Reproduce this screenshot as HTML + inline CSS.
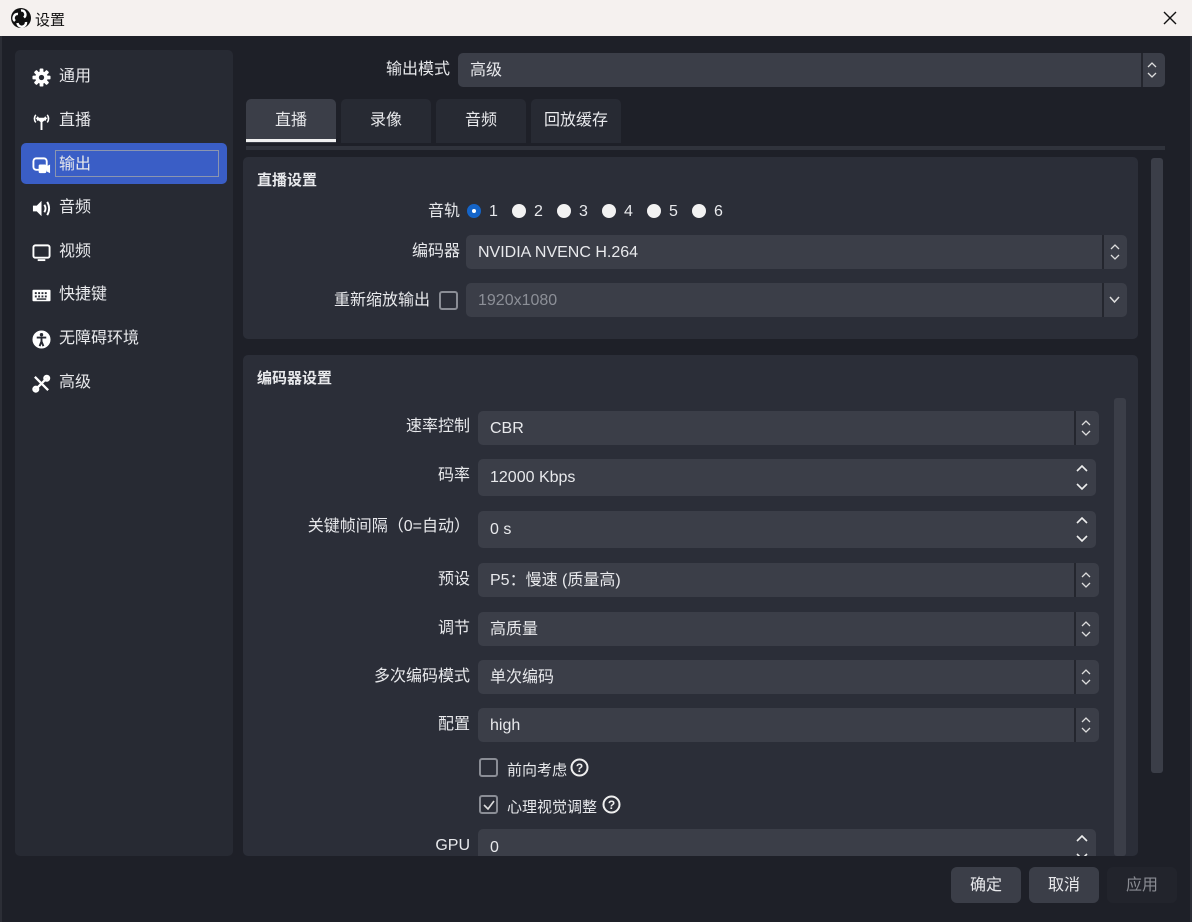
<!DOCTYPE html>
<html><head><meta charset="utf-8"><style>
*{box-sizing:border-box;margin:0;padding:0}
body{width:1192px;height:922px;overflow:hidden;background:#1e2028;font-family:"Liberation Sans","Noto Sans CJK SC",sans-serif;color:#e8e9ec;font-size:15px;position:relative}
.a{position:absolute}
.title{left:0;top:0;width:1192px;height:36px;background:#f5f1ef;color:#111;font-size:15px}
.panel{background:#272a33;border-radius:5px}
.grp{background:#2b2e38;border-radius:5px}
.in{background:#3b3e48;border-radius:5px;height:34px;line-height:35px;padding-left:12px;font-size:16px}
.lab{text-align:right;font-size:16px;line-height:20px}
.sep{position:absolute;top:0;bottom:0;width:2px;background:#24262e}
.nav{left:32px;font-size:16px;line-height:20px;display:flex;align-items:center}
.nav svg{margin-right:8px}
.tab{top:99px;height:44px;line-height:44px;text-align:center;background:#272a33;border-radius:5px 5px 0 0;font-size:16px}
.cb{width:19px;height:19px;border:2px solid #8a8d95;border-radius:3px}
.btn{top:867px;height:36px;width:70px;line-height:37px;text-align:center;background:#3b3e48;border-radius:6px;font-size:16px}
.rad{width:14px;height:14px;border-radius:50%;background:#f2f2f2;top:204px}
</style></head><body>
<div class="a title">
 <svg class="a" style="left:11px;top:8px" width="20" height="20" viewBox="0 0 20 20"><circle cx="10" cy="10" r="10" fill="#111"/><path d="M10 2.5A4 4 0 0 1 13 9.5M4 13A4 4 0 0 1 7 6M15 14A4 4 0 0 1 6.5 15" stroke="#fff" stroke-width="2.4" fill="none"/></svg>
 <div class="a" style="left:35px;top:9px">设置</div>
 <svg class="a" style="left:1163px;top:11px" width="14" height="14"><path d="M1 1L13 13M13 1L1 13" stroke="#111" stroke-width="1.4"/></svg>
</div>
<div class="a" style="left:0;top:36px;width:2px;height:886px;background:#2c2e36"></div>
<div class="a" style="left:1190px;top:36px;width:2px;height:886px;background:#2c2e36"></div>

<div class="a panel" style="left:15px;top:50px;width:218px;height:806px"></div>
<div class="a" style="left:21px;top:143px;width:206px;height:41px;background:#3a5ec6;border-radius:5px"></div>
<div class="a" style="left:55px;top:150px;width:164px;height:27px;border:1px solid #8a95b0"></div>

<div class="a nav" style="top:67px"><svg width="19" height="19" viewBox="0 0 20 20"><g fill="#fff"><circle cx="10" cy="10" r="6.5"/><rect x="8" y="0.5" width="4" height="19" rx="1"/><rect x="8" y="0.5" width="4" height="19" rx="1" transform="rotate(45 10 10)"/><rect x="8" y="0.5" width="4" height="19" rx="1" transform="rotate(90 10 10)"/><rect x="8" y="0.5" width="4" height="19" rx="1" transform="rotate(135 10 10)"/></g><circle cx="10" cy="10" r="2.8" fill="#272a33"/></svg>通用</div>
<div class="a nav" style="top:111px"><svg width="19" height="19" viewBox="0 0 20 20" fill="none" stroke="#fff" stroke-width="1.6"><path d="M4 3Q1 7 4 11M16 3Q19 7 16 11M6.5 5Q5 7 6.5 9M13.5 5Q15 7 13.5 9"/><path d="M10 8V19M6 7H14L10 10Z" fill="#fff" stroke-width="2"/></svg>直播</div>
<div class="a nav" style="top:155px"><svg width="19" height="19" viewBox="0 0 20 20"><rect x="1.5" y="2.5" width="14" height="12" rx="3" fill="none" stroke="#fff" stroke-width="2"/><rect x="7" y="9" width="8" height="9" rx="1.5" fill="#fff"/><path d="M15 11L19 9V18L15 16Z" fill="#fff"/></svg>输出</div>
<div class="a nav" style="top:198px"><svg width="19" height="19" viewBox="0 0 20 20"><path d="M1 7H5L10 2V18L5 13H1Z" fill="#fff"/><path d="M13 6Q15.5 10 13 14M16 3Q20 10 16 17" stroke="#fff" stroke-width="2" fill="none"/></svg>音频</div>
<div class="a nav" style="top:242px"><svg width="19" height="19" viewBox="0 0 20 20"><rect x="1.5" y="2.5" width="17" height="13" rx="2" fill="none" stroke="#fff" stroke-width="2"/><rect x="6" y="17" width="8" height="2" fill="#fff"/></svg>视频</div>
<div class="a nav" style="top:285px"><svg width="19" height="19" viewBox="0 0 20 20"><rect x="0.5" y="4" width="19" height="12" rx="1" fill="#fff"/><g fill="#272a33"><rect x="3" y="6.5" width="2" height="2"/><rect x="6.5" y="6.5" width="2" height="2"/><rect x="10" y="6.5" width="2" height="2"/><rect x="13.5" y="6.5" width="2" height="2"/><rect x="3" y="10" width="2" height="2"/><rect x="6.5" y="10" width="2" height="2"/><rect x="10" y="10" width="2" height="2"/><rect x="13.5" y="10" width="2" height="2"/><rect x="5" y="13" width="10" height="1.5"/></g></svg>快捷键</div>
<div class="a nav" style="top:329px"><svg width="19" height="19" viewBox="0 0 20 20"><circle cx="10" cy="10" r="9.5" fill="#fff"/><circle cx="10" cy="5" r="1.8" fill="#272a33"/><path d="M5 8H15M10 8V12M8 17L10 12L12 17" stroke="#272a33" stroke-width="2" fill="none"/></svg>无障碍环境</div>
<div class="a nav" style="top:373px"><svg width="19" height="19" viewBox="0 0 20 20" stroke="#fff" stroke-width="2.4" fill="none"><path d="M3 3L17 17M17 3L3 17"/><circle cx="15.5" cy="4.5" r="2.5"/><circle cx="4" cy="16" r="2.5"/></svg>高级</div>

<div class="a lab" style="left:360px;top:60px;width:90px;">输出模式</div>
<div class="a in" style="left:458px;top:53px;width:707px;">高级<span class="sep" style="left:683px"></span><svg class="a" style="right:8px;top:9px" width="10" height="16"><path d="M1 5L5 1L9 5M1 11L5 15L9 11" stroke="#ddd" stroke-width="1.3" fill="none"/></svg></div>

<div class="a" style="left:246px;top:146px;width:919px;height:4px;background:#30333c"></div>
<div class="a tab" style="left:246px;width:90px;background:#3b3e48">直播</div>
<div class="a" style="left:246px;top:139px;width:90px;height:3px;background:#f0f0f0"></div>
<div class="a tab" style="left:341px;width:90px">录像</div>
<div class="a tab" style="left:436px;width:90px">音频</div>
<div class="a tab" style="left:531px;width:90px">回放缓存</div>

<div class="a" style="left:1151px;top:158px;width:12px;height:615px;background:#3b3e48;border-radius:3px"></div>

<div class="a grp" style="left:243px;top:157px;width:895px;height:182px"></div>
<div class="a" style="left:257px;top:169px;font-weight:bold;font-size:15px">直播设置</div>
<div class="a lab" style="left:400px;top:202px;width:60px">音轨</div>
<div class="a" style="left:467px;top:204px;width:14px;height:14px;border-radius:50%;background:#1464c8;border:3px solid #1464c8"><div style="width:4px;height:4px;background:#fff;border-radius:50%;margin:2px"></div></div>
<div class="a" style="left:489px;top:203px;font-size:16px">1</div>
<div class="a rad" style="left:512px"></div><div class="a" style="left:534px;top:203px;font-size:16px">2</div>
<div class="a rad" style="left:557px"></div><div class="a" style="left:579px;top:203px;font-size:16px">3</div>
<div class="a rad" style="left:602px"></div><div class="a" style="left:624px;top:203px;font-size:16px">4</div>
<div class="a rad" style="left:647px"></div><div class="a" style="left:669px;top:203px;font-size:16px">5</div>
<div class="a rad" style="left:692px"></div><div class="a" style="left:714px;top:203px;font-size:16px">6</div>

<div class="a lab" style="left:370px;top:242px;width:90px">编码器</div>
<div class="a in" style="left:466px;top:235px;width:661px">NVIDIA NVENC H.264<span class="sep" style="left:636px"></span><svg class="a" style="right:7px;top:9px" width="10" height="16"><path d="M1 5L5 1L9 5M1 11L5 15L9 11" stroke="#ddd" stroke-width="1.3" fill="none"/></svg></div>
<div class="a lab" style="left:290px;top:291px;width:140px">重新缩放输出</div>
<div class="a cb" style="left:439px;top:291px"></div>
<div class="a in" style="left:466px;top:283px;width:661px;color:#8c8f97">1920x1080<span class="sep" style="left:636px"></span><svg class="a" style="right:7px;top:13px" width="11" height="8"><path d="M1 1L5.5 6L10 1" stroke="#ddd" stroke-width="1.5" fill="none"/></svg></div>

<div class="a grp" style="left:243px;top:355px;width:895px;height:501px"></div>
<div class="a" style="left:257px;top:367px;font-weight:bold;font-size:15px">编码器设置</div>
<div class="a" style="left:1114px;top:398px;width:12px;height:458px;background:#3b3e48;border-radius:3px"></div>

<div class="a lab" style="left:340px;top:417px;width:130px">速率控制</div>
<div class="a in" style="left:478px;top:411px;width:621px">CBR<span class="sep" style="left:596px"></span><svg class="a" style="right:8px;top:9px" width="10" height="16"><path d="M1 5L5 1L9 5M1 11L5 15L9 11" stroke="#ddd" stroke-width="1.3" fill="none"/></svg></div>
<div class="a lab" style="left:340px;top:466px;width:130px">码率</div>
<div class="a in" style="left:478px;top:459px;width:618px;height:37px;line-height:38px">12000 Kbps<svg class="a" style="right:8px;top:6px" width="12" height="26"><path d="M1 6L6 1L11 6M1 19L6 24L11 19" stroke="#eee" stroke-width="1.6" fill="none"/></svg></div>
<div class="a lab" style="left:270px;top:517px;width:200px">关键帧间隔（0=自动）</div>
<div class="a in" style="left:478px;top:511px;width:618px;height:37px;line-height:38px">0 s<svg class="a" style="right:8px;top:6px" width="12" height="26"><path d="M1 6L6 1L11 6M1 19L6 24L11 19" stroke="#eee" stroke-width="1.6" fill="none"/></svg></div>
<div class="a lab" style="left:340px;top:570px;width:130px">预设</div>
<div class="a in" style="left:478px;top:563px;width:621px">P5：慢速 (质量高)<span class="sep" style="left:596px"></span><svg class="a" style="right:8px;top:9px" width="10" height="16"><path d="M1 5L5 1L9 5M1 11L5 15L9 11" stroke="#ddd" stroke-width="1.3" fill="none"/></svg></div>
<div class="a lab" style="left:340px;top:619px;width:130px">调节</div>
<div class="a in" style="left:478px;top:612px;width:621px">高质量<span class="sep" style="left:596px"></span><svg class="a" style="right:8px;top:9px" width="10" height="16"><path d="M1 5L5 1L9 5M1 11L5 15L9 11" stroke="#ddd" stroke-width="1.3" fill="none"/></svg></div>
<div class="a lab" style="left:320px;top:667px;width:150px">多次编码模式</div>
<div class="a in" style="left:478px;top:660px;width:621px">单次编码<span class="sep" style="left:596px"></span><svg class="a" style="right:8px;top:9px" width="10" height="16"><path d="M1 5L5 1L9 5M1 11L5 15L9 11" stroke="#ddd" stroke-width="1.3" fill="none"/></svg></div>
<div class="a lab" style="left:340px;top:715px;width:130px">配置</div>
<div class="a in" style="left:478px;top:708px;width:621px">high<span class="sep" style="left:596px"></span><svg class="a" style="right:8px;top:9px" width="10" height="16"><path d="M1 5L5 1L9 5M1 11L5 15L9 11" stroke="#ddd" stroke-width="1.3" fill="none"/></svg></div>

<div class="a cb" style="left:479px;top:758px"></div>
<div class="a" style="left:507px;top:759px;font-size:15px">前向考虑</div>
<svg class="a" style="left:570px;top:758px" width="19" height="19"><circle cx="9.5" cy="9.5" r="8" fill="none" stroke="#eee" stroke-width="2"/><text x="9.5" y="14" text-anchor="middle" font-size="12" font-weight="bold" fill="#eee" font-family="Liberation Sans">?</text></svg>
<div class="a cb" style="left:479px;top:795px"><svg class="a" style="left:1px;top:1px" width="14" height="14"><path d="M2 7L6 11L12 3" stroke="#ddd" stroke-width="1.6" fill="none"/></svg></div>
<div class="a" style="left:507px;top:796px;font-size:15px">心理视觉调整</div>
<svg class="a" style="left:602px;top:795px" width="19" height="19"><circle cx="9.5" cy="9.5" r="8" fill="none" stroke="#eee" stroke-width="2"/><text x="9.5" y="14" text-anchor="middle" font-size="12" font-weight="bold" fill="#eee" font-family="Liberation Sans">?</text></svg>

<div class="a lab" style="left:340px;top:836px;width:130px">GPU</div>
<div class="a" style="left:478px;top:829px;width:618px;height:27px;overflow:hidden"><div class="in" style="height:37px;line-height:38px;position:relative">0<svg class="a" style="right:8px;top:6px" width="12" height="26"><path d="M1 6L6 1L11 6M1 19L6 24L11 19" stroke="#eee" stroke-width="1.6" fill="none"/></svg></div></div>

<div class="a btn" style="left:951px">确定</div>
<div class="a btn" style="left:1029px">取消</div>
<div class="a btn" style="left:1107px;background:#22242c;color:#8a8c93">应用</div>
</body></html>
